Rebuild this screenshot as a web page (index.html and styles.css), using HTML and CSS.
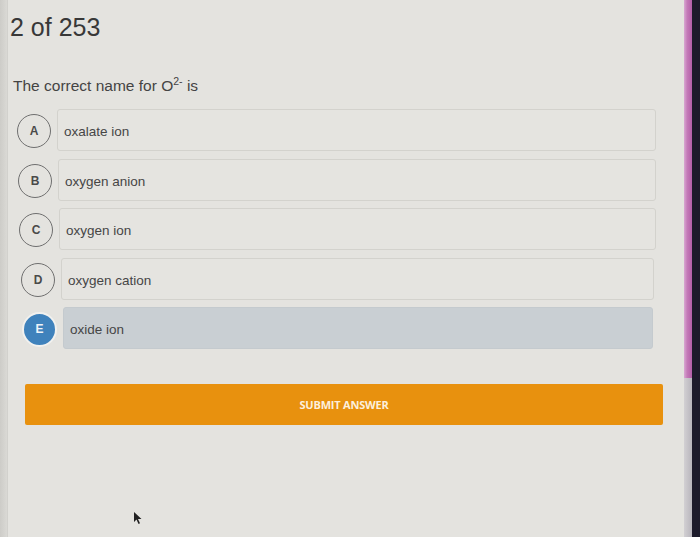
FILE: index.html
```html
<!DOCTYPE html>
<html>
<head>
<meta charset="utf-8">
<link rel="stylesheet" href="styles.css">
</head>
<body>
<div class="screen">
  <div class="edge-left"></div>
  <main class="page">
    <h1 class="counter">2 of 253</h1>
    <p class="question">The correct name for O<sup>2-</sup> is</p>
    <div class="options">
      <div class="option"><span class="badge">A</span><div class="box">oxalate ion</div></div>
      <div class="option"><span class="badge">B</span><div class="box">oxygen anion</div></div>
      <div class="option"><span class="badge">C</span><div class="box">oxygen ion</div></div>
      <div class="option"><span class="badge">D</span><div class="box">oxygen cation</div></div>
      <div class="option selected"><span class="badge">E</span><div class="box">oxide ion</div></div>
    </div>
    <button class="submit">SUBMIT ANSWER</button>
    <svg class="cursor" width="10" height="14" viewBox="0 0 10 14"><path d="M1 1 L1 11 L3.5 8.5 L5.5 13 L7 12.3 L5 8 L8.5 8 Z" fill="#222"/></svg>
  </main>
  <div class="edge-right">
    <div class="strip-pink"></div>
    <div class="strip-grey"></div>
  </div>
  <div class="edge-dark"></div>
</div>
</body>
</html>
```

FILE: styles.css
```css
html, body {
  margin: 0;
  padding: 0;
  height: 100%;
}
body {
  background: #e3e2de;
  font-family: "Liberation Sans", Arial, sans-serif;
  color: #3d3d3d;
}
.screen {
  display: flex;
  height: 537px;
  overflow: hidden;
}
.edge-left {
  width: 7px;
  background: linear-gradient(90deg, #cdccc8, #dad9d5);
  border-right: 1px solid #d2d1cd;
}
.page {
  position: relative;
  flex: 1;
  background: #e4e3df;
  padding: 0 21px 0 2px;
}
.counter {
  margin: 12px 0 0 0;
  font-size: 25px;
  line-height: 30px;
  font-weight: 400;
  color: #383838;
}
.question {
  margin: 34px 0 0 3px;
  font-size: 15.5px;
  line-height: 20px;
  color: #444;
}
.question sup {
  font-size: 10.5px;
  line-height: 0;
  vertical-align: 6px;
}
.options {
  margin: 13px 0 0 7px;
  display: flex;
  flex-direction: column;
  gap: 7.5px;
  padding-right: 7px;
}
.option {
  display: flex;
  align-items: center;
  gap: 6px;
}
.badge {
  width: 32px;
  height: 32px;
  flex: none;
  border: 1px solid #6f6f6f;
  border-radius: 50%;
  display: flex;
  align-items: center;
  justify-content: center;
  font-size: 12px;
  font-weight: 700;
  color: #4a4a4a;
  margin-top: 2px;
}
.box {
  flex: 1;
  border: 1px solid #d3d2cd;
  border-radius: 3px;
  background: #e5e4e0;
  display: flex;
  align-items: center;
  padding-left: 6px;
  padding-top: 3px;
  box-sizing: border-box;
  height: 42px;
  font-size: 13.5px;
  color: #464646;
}
.option:nth-child(2) { padding-left: 1px; }
.option:nth-child(3) { padding-left: 2px; }
.option:nth-child(4) { padding-left: 4px; padding-right: 2px; }
.option:nth-child(5) { padding-left: 5px; padding-right: 3px; }
.option.selected .badge {
  background: #3f82bc;
  border: 2px solid #f1f1ef;
  width: 31px;
  height: 31px;
  color: #eef3f8;
}
.option.selected .box {
  background: #c9cfd3;
  border-color: #c4cace;
}
.submit {
  display: block;
  margin: 35px 0 0 15px;
  width: 638px;
  height: 41px;
  border: none;
  border-radius: 2px;
  background: #e8910e;
  color: #fcefdc;
  font-family: "Open Sans", "Liberation Sans", sans-serif;
  font-weight: 700;
  font-size: 11px;
  letter-spacing: -0.2px;
  padding: 0;
}
.cursor {
  position: absolute;
  left: 125px;
  top: 511px;
}
.edge-right {
  width: 8px;
  display: flex;
  flex-direction: column;
}
.strip-pink {
  height: 378px;
  background: linear-gradient(90deg, #d9a8d2, #c47ab8 40%, #b45fa8);
}
.strip-grey {
  flex: 1;
  background: linear-gradient(90deg, #d2d0d3, #b8b5bc);
}
.edge-dark {
  width: 8px;
  background: #1d1b2b;
}
```
